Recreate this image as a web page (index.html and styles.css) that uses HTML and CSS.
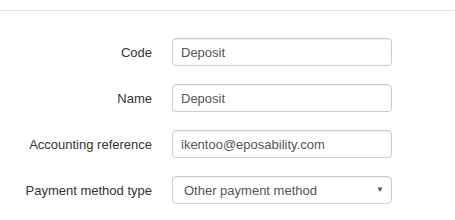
FILE: index.html
```html
<!DOCTYPE html>
<html lang="en">
<head>
    <meta charset="UTF-8">
    <title>Payment method</title>
    <link rel="stylesheet" href="styles.css">
</head>
<body>
    <div class="top-bar"></div>

    <form class="form-horizontal">
        <div class="form-group">
            <label class="control-label" for="code">Code</label>
            <input class="form-control" id="code" type="text" value="Deposit">
        </div>
        <div class="form-group">
            <label class="control-label" for="name">Name</label>
            <input class="form-control" id="name" type="text" value="Deposit">
        </div>
        <div class="form-group">
            <label class="control-label" for="accRef">Accounting reference</label>
            <input class="form-control" id="accRef" type="text" value="ikentoo@eposability.com">
        </div>
        <div class="form-group">
            <label class="control-label" for="pmType">Payment method type</label>
            <div class="select-wrap">
                <select class="form-control" id="pmType">
                    <option>Other payment method</option>
                </select>
                <span class="caret">&#9660;</span>
            </div>
        </div>
    </form>
</body>
</html>
```

FILE: styles.css
```css
body {
    font-family: "Liberation Sans", Arial, sans-serif;
    font-size: 13px;
    color: #333;
    margin: 0;
    background-color: #fff;
}
.top-bar {
    height: 10px;
    border-bottom: 1px solid #e5e5e5;
}
.form-horizontal {
    padding-top: 27px;
}
.form-group {
    display: flex;
    align-items: center;
    margin-bottom: 18px;
}
.control-label {
    width: 172px;
    text-align: right;
    padding-right: 20px;
    box-sizing: border-box;
}
.form-control {
    width: 220px;
    height: 28px;
    padding: 4px 8px;
    font-family: inherit;
    font-size: 13px;
    color: #555;
    background-color: #fff;
    border: 1px solid #ccc;
    border-radius: 4px;
    box-shadow: inset 0 1px 1px rgba(0, 0, 0, 0.075);
    box-sizing: border-box;
    margin: 0;
}
.select-wrap {
    position: relative;
}
.select-wrap select {
    appearance: none;
    -webkit-appearance: none;
    padding-left: 11px;
}
.caret {
    position: absolute;
    right: 8px;
    top: 9px;
    font-size: 8px;
    color: #555;
    pointer-events: none;
}
```
